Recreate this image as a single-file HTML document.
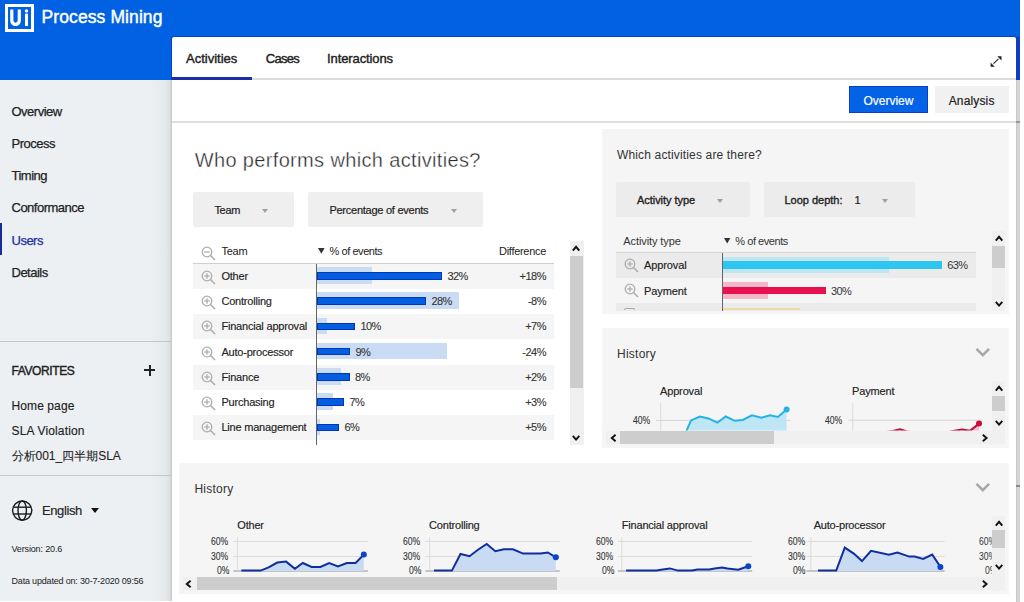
<!DOCTYPE html>
<html><head><meta charset="utf-8">
<style>
*{box-sizing:border-box;margin:0;padding:0}
html,body{width:1024px;height:602px;overflow:hidden;background:#fff;font-family:"Liberation Sans",sans-serif;color:#222}
.a{position:absolute;white-space:nowrap;line-height:1}
svg.a{overflow:visible}
</style></head><body>
<div class="a" style="left:0px;top:0px;width:1020px;height:80px;background:#0061e2;"></div>
<div class="a" style="left:5px;top:4px;width:29px;height:28px;background:transparent;border:3px solid #fff"></div>
<svg class="a" style="left:0;top:0" width="40" height="40"><g fill="#fff"><path d="M10.2 9.4H13.4V20.6A2.15 2.15 0 0 0 17.7 20.6V9.4H20.9V20.6A5.35 5.35 0 0 1 10.2 20.6Z"/><rect x="25" y="13.6" width="3" height="12.4"/><circle cx="26.5" cy="10.9" r="1.7"/></g></svg>
<div class="a " style="left:41.5px;top:8.6px;font-size:17.5px;color:#fff;letter-spacing:0.1px;-webkit-text-stroke:0.45px #fff">Process Mining</div>
<div class="a" style="left:0px;top:80px;width:172px;height:521px;background:linear-gradient(to right,#ecf0f3 0,#ecf0f3 150px,#e6e9ec 166px,#dde0e3 170px,#c9ccd0 171px,#c9ccd0 172px);"></div>
<div class="a " style="left:11.5px;top:104.5px;font-size:13px;letter-spacing:-0.5px;color:#222;-webkit-text-stroke:0.25px #222">Overview</div>
<div class="a " style="left:11.5px;top:137.0px;font-size:13px;letter-spacing:-0.5px;color:#222;-webkit-text-stroke:0.25px #222">Process</div>
<div class="a " style="left:11.5px;top:168.8px;font-size:13px;letter-spacing:-0.5px;color:#222;-webkit-text-stroke:0.25px #222">Timing</div>
<div class="a " style="left:11.5px;top:201.2px;font-size:13px;letter-spacing:-0.5px;color:#222;-webkit-text-stroke:0.25px #222">Conformance</div>
<div class="a " style="left:11.5px;top:233.6px;font-size:13px;letter-spacing:-0.5px;color:#1a2fa0;-webkit-text-stroke:0.25px #1a2fa0">Users</div>
<div class="a " style="left:11.5px;top:265.6px;font-size:13px;letter-spacing:-0.5px;color:#222;-webkit-text-stroke:0.25px #222">Details</div>
<div class="a" style="left:0px;top:222.5px;width:2px;height:32.0px;background:#1a2a9c;"></div>
<div class="a" style="left:0px;top:341px;width:172px;height:1px;background:#c4c6c9;"></div>
<div class="a " style="left:11.5px;top:364.7px;font-size:12px;letter-spacing:-0.4px;-webkit-text-stroke:0.4px #222">FAVORITES</div>
<div class="a" style="left:144px;top:369px;width:11px;height:2px;background:#222;"></div>
<div class="a" style="left:148.5px;top:364.5px;width:2.0px;height:11.0px;background:#222;"></div>
<div class="a " style="left:11.5px;top:399.6px;font-size:12px;letter-spacing:0.1px;-webkit-text-stroke:0.15px #222">Home page</div>
<div class="a " style="left:11.5px;top:424.5px;font-size:12px;letter-spacing:0.15px;-webkit-text-stroke:0.15px #222">SLA Violation</div>
<div class="a " style="left:11.5px;top:449.8px;font-size:12px;letter-spacing:0px;-webkit-text-stroke:0.1px #222">分析001_四半期SLA</div>
<div class="a" style="left:0px;top:475px;width:172px;height:1px;background:#c4c6c9;"></div>
<svg class="a" style="left:11px;top:500px" width="23" height="22" viewBox="0 0 23 22"><g fill="none" stroke="#1a1a1a" stroke-width="1.4"><circle cx="11.2" cy="10.6" r="9.6"/><ellipse cx="11.2" cy="10.6" rx="4.2" ry="9.6"/><line x1="2.5" y1="7.2" x2="19.9" y2="7.2"/><line x1="2.5" y1="14" x2="19.9" y2="14"/></g></svg>
<div class="a " style="left:42px;top:503.7px;font-size:13px;letter-spacing:-0.4px;-webkit-text-stroke:0.15px #222">English</div>
<div class="a" style="left:91px;top:507.5px;width:0;height:0;border-left:4px solid transparent;border-right:4px solid transparent;border-top:5px solid #111"></div>
<div class="a " style="left:11.5px;top:544.5px;font-size:9px;letter-spacing:-0.15px">Version: 20.6</div>
<div class="a " style="left:11.5px;top:577.4px;font-size:9px;letter-spacing:-0.18px">Data updated on: 30-7-2020 09:56</div>
<div class="a" style="left:172px;top:37px;width:844px;height:565px;background:#fff;border-radius:2px 2px 0 0;box-shadow:0 -1px 0 #0a40c4"></div>
<div class="a" style="left:171px;top:37px;width:1px;height:43px;background:#0a40c4;"></div>
<div class="a" style="left:1016px;top:37px;width:4px;height:43px;background:#0f3dc0;"></div>
<div class="a" style="left:1020px;top:0px;width:4px;height:602px;background:#fff;"></div>
<div class="a" style="left:1016px;top:80px;width:4px;height:522px;background:#d4d5d7;box-shadow:inset 1px 0 0 #c8c9cb"></div>
<div class="a" style="left:1016px;top:121px;width:4px;height:1.5px;background:#9a9a9a;"></div>
<div class="a" style="left:1016px;top:485px;width:4px;height:1.5px;background:#8a8a8a;"></div>
<div class="a " style="left:186px;top:51.7px;font-size:13px;letter-spacing:0px;-webkit-text-stroke:0.4px #222">Activities</div>
<div class="a " style="left:265.7px;top:51.7px;font-size:13px;letter-spacing:-0.7px;-webkit-text-stroke:0.4px #222">Cases</div>
<div class="a " style="left:327px;top:51.7px;font-size:13px;letter-spacing:-0.1px;-webkit-text-stroke:0.4px #222">Interactions</div>
<div class="a" style="left:172px;top:78px;width:844px;height:1.5px;background:#dcdcdc;"></div>
<div class="a" style="left:172px;top:76.5px;width:80px;height:3.0px;background:#1a2ea8;"></div>
<svg class="a" style="left:989px;top:55px" width="14" height="13" viewBox="0 0 14 13"><g stroke="#222" stroke-width="1.1" fill="none"><line x1="4.5" y1="8.6" x2="9.5" y2="3.8"/></g><g fill="#222"><path d="M8.3 1.3h4.2v4.1z"/><path d="M5.8 11.7h-4.2v-4.1z"/></g></svg>
<div class="a" style="left:849px;top:86px;width:79px;height:27px;background:#0362e6;border:1px solid #0a3fc0"></div>
<div class="a " style="left:863.4px;top:95.2px;font-size:12px;color:#fff;letter-spacing:0px;-webkit-text-stroke:0.2px #fff">Overview</div>
<div class="a" style="left:935px;top:86px;width:74px;height:27px;background:#f1f1f1;"></div>
<div class="a " style="left:948.7px;top:95.2px;font-size:12px;letter-spacing:0.15px;-webkit-text-stroke:0.2px #222">Analysis</div>
<div class="a" style="left:172px;top:121px;width:844px;height:1.5px;background:#dedede;"></div>
<div class="a " style="left:194.7px;top:149.6px;font-size:20px;letter-spacing:0.35px;color:#2a2a2a;-webkit-text-stroke:0.35px #fff">Who performs which activities?</div>
<div class="a" style="left:193px;top:192px;width:101px;height:35px;background:#efefef;border-radius:2px"></div>
<div class="a" style="left:308px;top:192px;width:175px;height:35px;background:#efefef;border-radius:2px"></div>
<div class="a " style="left:214.4px;top:205.1px;font-size:11px;letter-spacing:-0.3px;-webkit-text-stroke:0.2px #222">Team</div>
<div class="a " style="left:329.4px;top:205.1px;font-size:11px;letter-spacing:-0.25px;-webkit-text-stroke:0.2px #222">Percentage of events</div>
<div class="a" style="left:262px;top:208.6px;width:0;height:0;border-left:3.8px solid transparent;border-right:3.8px solid transparent;border-top:4.3px solid #a0a0a0"></div>
<div class="a" style="left:450.5px;top:208.6px;width:0;height:0;border-left:3.8px solid transparent;border-right:3.8px solid transparent;border-top:4.3px solid #a0a0a0"></div>
<svg class="a" style="left:201px;top:245.8px" width="16" height="16" viewBox="0 0 16 16"><g fill="none" stroke="#adadad" stroke-width="1.3"><circle cx="6" cy="6" r="4.8"/><line x1="9.5" y1="9.5" x2="14" y2="14" stroke-width="1.6"/><line x1="3.3" y1="6" x2="8.7" y2="6"/></g></svg>
<div class="a " style="left:221.4px;top:245.8px;font-size:11px;letter-spacing:-0.2px">Team</div>
<svg class="a" style="left:318px;top:248px" width="8" height="7"><path d="M0 0h6.6l-3.3 5.8z" fill="#333"/></svg>
<div class="a " style="left:329.6px;top:245.8px;font-size:11px;letter-spacing:-0.45px">% of events</div>
<div class="a" style="right:478px;top:245.8px;font-size:11px;letter-spacing:-0.3px">Difference</div>
<div class="a" style="left:193px;top:263px;width:361px;height:1px;background:#cfcfcf;"></div>
<div class="a" style="left:193px;top:263.7px;width:361px;height:25.19999999999999px;background:#f5f5f5;"></div>
<svg class="a" style="left:201px;top:269.9px" width="16" height="16" viewBox="0 0 16 16"><g fill="none" stroke="#adadad" stroke-width="1.3"><circle cx="6" cy="6" r="4.8"/><line x1="9.5" y1="9.5" x2="14" y2="14" stroke-width="1.6"/><line x1="3.3" y1="6" x2="8.7" y2="6"/><line x1="6" y1="3.3" x2="6" y2="8.7"/></g></svg>
<div class="a " style="left:221.4px;top:270.8px;font-size:11px;letter-spacing:-0.2px;-webkit-text-stroke:0.15px #222">Other</div>
<div class="a" style="left:317px;top:267.1px;width:55px;height:16.599999999999966px;background:#cadcf4;"></div>
<div class="a" style="left:317px;top:272.0px;width:125px;height:7.600000000000023px;background:#035fe0;box-shadow:inset 0 0 0 1px #0436b8"></div>
<div class="a " style="left:447.5px;top:270.8px;font-size:11px;letter-spacing:-0.6px;color:#333;-webkit-text-stroke:0.1px #333">32%</div>
<div class="a" style="right:478px;top:270.8px;font-size:11px;letter-spacing:-0.5px;color:#333;-webkit-text-stroke:0.1px #333">+18%</div>
<svg class="a" style="left:201px;top:295.2px" width="16" height="16" viewBox="0 0 16 16"><g fill="none" stroke="#adadad" stroke-width="1.3"><circle cx="6" cy="6" r="4.8"/><line x1="9.5" y1="9.5" x2="14" y2="14" stroke-width="1.6"/><line x1="3.3" y1="6" x2="8.7" y2="6"/><line x1="6" y1="3.3" x2="6" y2="8.7"/></g></svg>
<div class="a " style="left:221.4px;top:296.0px;font-size:11px;letter-spacing:-0.2px;-webkit-text-stroke:0.15px #222">Controlling</div>
<div class="a" style="left:317px;top:292.4px;width:142px;height:16.5px;background:#cadcf4;"></div>
<div class="a" style="left:317px;top:297.2px;width:109px;height:7.699999999999989px;background:#035fe0;box-shadow:inset 0 0 0 1px #0436b8"></div>
<div class="a " style="left:431.5px;top:296.0px;font-size:11px;letter-spacing:-0.6px;color:#333;-webkit-text-stroke:0.1px #333">28%</div>
<div class="a" style="right:478px;top:296.0px;font-size:11px;letter-spacing:-0.5px;color:#333;-webkit-text-stroke:0.1px #333">-8%</div>
<div class="a" style="left:193px;top:314.2px;width:361px;height:25.19999999999999px;background:#f5f5f5;"></div>
<svg class="a" style="left:201px;top:320.4px" width="16" height="16" viewBox="0 0 16 16"><g fill="none" stroke="#adadad" stroke-width="1.3"><circle cx="6" cy="6" r="4.8"/><line x1="9.5" y1="9.5" x2="14" y2="14" stroke-width="1.6"/><line x1="3.3" y1="6" x2="8.7" y2="6"/><line x1="6" y1="3.3" x2="6" y2="8.7"/></g></svg>
<div class="a " style="left:221.4px;top:321.3px;font-size:11px;letter-spacing:-0.2px;-webkit-text-stroke:0.15px #222">Financial approval</div>
<div class="a" style="left:317px;top:317.6px;width:10px;height:16.599999999999966px;background:#cadcf4;"></div>
<div class="a" style="left:317px;top:322.5px;width:38px;height:7.600000000000023px;background:#035fe0;box-shadow:inset 0 0 0 1px #0436b8"></div>
<div class="a " style="left:360.5px;top:321.3px;font-size:11px;letter-spacing:-0.6px;color:#333;-webkit-text-stroke:0.1px #333">10%</div>
<div class="a" style="right:478px;top:321.3px;font-size:11px;letter-spacing:-0.5px;color:#333;-webkit-text-stroke:0.1px #333">+7%</div>
<svg class="a" style="left:201px;top:345.7px" width="16" height="16" viewBox="0 0 16 16"><g fill="none" stroke="#adadad" stroke-width="1.3"><circle cx="6" cy="6" r="4.8"/><line x1="9.5" y1="9.5" x2="14" y2="14" stroke-width="1.6"/><line x1="3.3" y1="6" x2="8.7" y2="6"/><line x1="6" y1="3.3" x2="6" y2="8.7"/></g></svg>
<div class="a " style="left:221.4px;top:346.5px;font-size:11px;letter-spacing:-0.2px;-webkit-text-stroke:0.15px #222">Auto-processor</div>
<div class="a" style="left:317px;top:342.9px;width:130px;height:16.5px;background:#cadcf4;"></div>
<div class="a" style="left:317px;top:347.8px;width:33px;height:7.599999999999966px;background:#035fe0;box-shadow:inset 0 0 0 1px #0436b8"></div>
<div class="a " style="left:355.5px;top:346.5px;font-size:11px;letter-spacing:-0.6px;color:#333;-webkit-text-stroke:0.1px #333">9%</div>
<div class="a" style="right:478px;top:346.5px;font-size:11px;letter-spacing:-0.5px;color:#333;-webkit-text-stroke:0.1px #333">-24%</div>
<div class="a" style="left:193px;top:364.7px;width:361px;height:25.19999999999999px;background:#f5f5f5;"></div>
<svg class="a" style="left:201px;top:370.9px" width="16" height="16" viewBox="0 0 16 16"><g fill="none" stroke="#adadad" stroke-width="1.3"><circle cx="6" cy="6" r="4.8"/><line x1="9.5" y1="9.5" x2="14" y2="14" stroke-width="1.6"/><line x1="3.3" y1="6" x2="8.7" y2="6"/><line x1="6" y1="3.3" x2="6" y2="8.7"/></g></svg>
<div class="a " style="left:221.4px;top:371.8px;font-size:11px;letter-spacing:-0.2px;-webkit-text-stroke:0.15px #222">Finance</div>
<div class="a" style="left:317px;top:368.1px;width:24px;height:16.599999999999966px;background:#cadcf4;"></div>
<div class="a" style="left:317px;top:373.0px;width:32.5px;height:7.600000000000023px;background:#035fe0;box-shadow:inset 0 0 0 1px #0436b8"></div>
<div class="a " style="left:355.0px;top:371.8px;font-size:11px;letter-spacing:-0.6px;color:#333;-webkit-text-stroke:0.1px #333">8%</div>
<div class="a" style="right:478px;top:371.8px;font-size:11px;letter-spacing:-0.5px;color:#333;-webkit-text-stroke:0.1px #333">+2%</div>
<svg class="a" style="left:201px;top:396.2px" width="16" height="16" viewBox="0 0 16 16"><g fill="none" stroke="#adadad" stroke-width="1.3"><circle cx="6" cy="6" r="4.8"/><line x1="9.5" y1="9.5" x2="14" y2="14" stroke-width="1.6"/><line x1="3.3" y1="6" x2="8.7" y2="6"/><line x1="6" y1="3.3" x2="6" y2="8.7"/></g></svg>
<div class="a " style="left:221.4px;top:397.0px;font-size:11px;letter-spacing:-0.2px;-webkit-text-stroke:0.15px #222">Purchasing</div>
<div class="a" style="left:317px;top:393.4px;width:16px;height:16.5px;background:#cadcf4;"></div>
<div class="a" style="left:317px;top:398.2px;width:27px;height:7.699999999999989px;background:#035fe0;box-shadow:inset 0 0 0 1px #0436b8"></div>
<div class="a " style="left:349.5px;top:397.0px;font-size:11px;letter-spacing:-0.6px;color:#333;-webkit-text-stroke:0.1px #333">7%</div>
<div class="a" style="right:478px;top:397.0px;font-size:11px;letter-spacing:-0.5px;color:#333;-webkit-text-stroke:0.1px #333">+3%</div>
<div class="a" style="left:193px;top:415.2px;width:361px;height:25.19999999999999px;background:#f5f5f5;"></div>
<svg class="a" style="left:201px;top:421.4px" width="16" height="16" viewBox="0 0 16 16"><g fill="none" stroke="#adadad" stroke-width="1.3"><circle cx="6" cy="6" r="4.8"/><line x1="9.5" y1="9.5" x2="14" y2="14" stroke-width="1.6"/><line x1="3.3" y1="6" x2="8.7" y2="6"/><line x1="6" y1="3.3" x2="6" y2="8.7"/></g></svg>
<div class="a " style="left:221.4px;top:422.3px;font-size:11px;letter-spacing:-0.2px;-webkit-text-stroke:0.15px #222">Line management</div>
<div class="a" style="left:317px;top:418.6px;width:3px;height:16.599999999999966px;background:#cadcf4;"></div>
<div class="a" style="left:317px;top:423.5px;width:22px;height:7.600000000000023px;background:#035fe0;box-shadow:inset 0 0 0 1px #0436b8"></div>
<div class="a " style="left:344.5px;top:422.3px;font-size:11px;letter-spacing:-0.6px;color:#333;-webkit-text-stroke:0.1px #333">6%</div>
<div class="a" style="right:478px;top:422.3px;font-size:11px;letter-spacing:-0.5px;color:#333;-webkit-text-stroke:0.1px #333">+5%</div>
<div class="a" style="left:316px;top:263.5px;width:1px;height:181.2px;background:#666;"></div>
<div class="a" style="left:569.5px;top:241px;width:14.5px;height:203.5px;background:#f0f0f0;"></div>
<div class="a" style="left:570px;top:256px;width:13px;height:132px;background:#cdcdcd;"></div>
<svg class="a" style="left:572.4px;top:245.7px" width="8.5" height="6"><path d="M0.8 4.6L4.05 0.8L7.3 4.6" fill="none" stroke="#111" stroke-width="1.9"/></svg>
<svg class="a" style="left:572.4px;top:435px" width="8.5" height="6"><path d="M0.8 0.8L4.05 4.6L7.3 0.8" fill="none" stroke="#111" stroke-width="1.9"/></svg>
<div class="a" style="left:602px;top:129px;width:407px;height:185px;background:#f5f5f5;"></div>
<div class="a " style="left:617px;top:148.7px;font-size:12px;letter-spacing:0.15px;color:#333">Which activities are there?</div>
<div class="a" style="left:616px;top:182px;width:134px;height:34.5px;background:#ececec;border-radius:2px"></div>
<div class="a" style="left:764px;top:182px;width:151px;height:34.5px;background:#ececec;border-radius:2px"></div>
<div class="a " style="left:637px;top:194.7px;font-size:11px;letter-spacing:-0.05px;color:#222;-webkit-text-stroke:0.35px #222">Activity type</div>
<div class="a" style="left:717px;top:198.6px;width:0;height:0;border-left:3.8px solid transparent;border-right:3.8px solid transparent;border-top:4.3px solid #a0a0a0"></div>
<div class="a " style="left:784.4px;top:194.7px;font-size:11px;letter-spacing:0px;color:#222;-webkit-text-stroke:0.35px #222">Loop depth:</div>
<div class="a " style="left:854.5px;top:194.7px;font-size:11px;color:#222;-webkit-text-stroke:0.2px #222">1</div>
<div class="a" style="left:882px;top:198.6px;width:0;height:0;border-left:3.8px solid transparent;border-right:3.8px solid transparent;border-top:4.3px solid #a0a0a0"></div>
<div class="a " style="left:623.3px;top:235.7px;font-size:11px;letter-spacing:-0.1px;color:#333">Activity type</div>
<svg class="a" style="left:723.7px;top:238px" width="8" height="7"><path d="M0 0h6.4l-3.2 5.6z" fill="#333"/></svg>
<div class="a " style="left:735.3px;top:235.7px;font-size:11px;letter-spacing:-0.45px;color:#333">% of events</div>
<div class="a" style="left:616px;top:252.4px;width:360px;height:25.400000000000006px;background:#ebebeb;"></div>
<div class="a" style="left:616px;top:252px;width:360px;height:1px;background:#d6d6d6;"></div>
<div class="a" style="left:616px;top:303px;width:360px;height:7.5px;background:#ebebeb;"></div>
<div class="a" style="left:722px;top:257.4px;width:167px;height:16.100000000000023px;background:#bfe4f2;"></div>
<div class="a" style="left:722px;top:261.2px;width:220px;height:7.800000000000011px;background:#2dc6f0;"></div>
<div class="a " style="left:947.3px;top:260.3px;font-size:11px;letter-spacing:-0.6px;color:#333">63%</div>
<svg class="a" style="left:623.5px;top:257.9px" width="16" height="16" viewBox="0 0 16 16"><g fill="none" stroke="#adadad" stroke-width="1.3"><circle cx="6" cy="6" r="4.8"/><line x1="9.5" y1="9.5" x2="14" y2="14" stroke-width="1.6"/><line x1="3.3" y1="6" x2="8.7" y2="6"/><line x1="6" y1="3.3" x2="6" y2="8.7"/></g></svg>
<div class="a " style="left:644px;top:260.3px;font-size:11px;letter-spacing:-0.1px;color:#222;-webkit-text-stroke:0.15px #222">Approval</div>
<div class="a" style="left:722px;top:282.3px;width:46px;height:16.69999999999999px;background:#f4b6c9;"></div>
<div class="a" style="left:722px;top:286.8px;width:104px;height:7.599999999999966px;background:#e8104e;"></div>
<div class="a " style="left:831px;top:285.6px;font-size:11px;letter-spacing:-0.6px;color:#333">30%</div>
<svg class="a" style="left:623.5px;top:283.2px" width="16" height="16" viewBox="0 0 16 16"><g fill="none" stroke="#adadad" stroke-width="1.3"><circle cx="6" cy="6" r="4.8"/><line x1="9.5" y1="9.5" x2="14" y2="14" stroke-width="1.6"/><line x1="3.3" y1="6" x2="8.7" y2="6"/><line x1="6" y1="3.3" x2="6" y2="8.7"/></g></svg>
<div class="a " style="left:644px;top:285.6px;font-size:11px;letter-spacing:-0.1px;color:#222;-webkit-text-stroke:0.15px #222">Payment</div>
<div class="a" style="left:722px;top:307.7px;width:78px;height:2.8000000000000114px;background:#f1dba4;"></div>
<div class="a" style="left:624px;top:308.3px;width:11px;height:2.2px;border-radius:6px 6px 0 0;border:1.3px solid #a9a9a9;border-bottom:none"></div>
<div class="a" style="left:722px;top:252.5px;width:1px;height:58.0px;background:#666;"></div>
<div class="a" style="left:992px;top:231px;width:13px;height:79.5px;background:#f0f0f0;"></div>
<div class="a" style="left:992px;top:245.6px;width:13px;height:22.400000000000006px;background:#cdcdcd;"></div>
<svg class="a" style="left:995px;top:236px" width="8.5" height="6"><path d="M0.8 4.6L4.05 0.8L7.3 4.6" fill="none" stroke="#111" stroke-width="1.9"/></svg>
<svg class="a" style="left:995px;top:300.5px" width="8.5" height="6"><path d="M0.8 0.8L4.05 4.6L7.3 0.8" fill="none" stroke="#111" stroke-width="1.9"/></svg>
<div class="a" style="left:602px;top:328px;width:407px;height:120px;background:#f5f5f5;"></div>
<div class="a " style="left:617px;top:347.8px;font-size:12px;letter-spacing:0.25px;color:#333">History</div>
<svg class="a" style="left:975px;top:347px" width="16" height="11"><path d="M1.5 1.8L7.8 8.2L14.1 1.8" fill="none" stroke="#a8a8a8" stroke-width="2.6"/></svg>
<div class="a " style="left:660px;top:385.7px;font-size:11px;letter-spacing:-0.15px;color:#222;-webkit-text-stroke:0.15px #222">Approval</div>
<div class="a " style="left:633.3px;top:416.0px;font-size:10px;color:#333;-webkit-text-stroke:0.1px #333;transform:scaleX(0.86);transform-origin:0 0">40%</div>
<div class="a " style="left:852.1px;top:385.7px;font-size:11px;letter-spacing:-0.15px;color:#222;-webkit-text-stroke:0.15px #222">Payment</div>
<div class="a " style="left:825.4px;top:416.0px;font-size:10px;color:#333;-webkit-text-stroke:0.1px #333;transform:scaleX(0.86);transform-origin:0 0">40%</div>
<svg class="a" style="left:0;top:0;overflow:hidden" width="1024" height="602"><defs><clipPath id="c602_380"><rect x="602" y="380" width="390" height="50.5"/></clipPath></defs><g clip-path="url(#c602_380)"><line x1="660.7" y1="402.8" x2="660.7" y2="431" stroke="#dcdcdc" stroke-width="1"/><line x1="656" y1="420.4" x2="790.5" y2="420.4" stroke="#d6d6d6" stroke-width="1"/><path d="M686.0 432.0 L691.0 420.4 L700.0 416.5 L708.5 418.4 L717.3 422.7 L725.7 416.5 L734.9 420.8 L742.7 420.0 L751.9 415.3 L761.3 417.7 L770.0 415.3 L777.9 416.9 L786.6 409.6 L786.6 440 L686 440Z" fill="#bfe6f5"/><path d="M686.0 432.0 L691.0 420.4 L700.0 416.5 L708.5 418.4 L717.3 422.7 L725.7 416.5 L734.9 420.8 L742.7 420.0 L751.9 415.3 L761.3 417.7 L770.0 415.3 L777.9 416.9 L786.6 409.6" fill="none" stroke="#22b3e6" stroke-width="2"/><circle cx="786.6" cy="409.6" r="3" fill="#22b3e6"/><line x1="852.8" y1="402.8" x2="852.8" y2="431" stroke="#dcdcdc" stroke-width="1"/><line x1="848.5" y1="420.2" x2="982" y2="420.2" stroke="#d6d6d6" stroke-width="1"/><path d="M853.0 433.0 L880.0 433.0 L893.0 431.0 L900.0 429.3 L907.0 431.5 L920.0 433.0 L945.0 433.0 L953.0 431.0 L962.0 429.6 L970.0 430.8 L979.0 423.6 L979 440 L853 440Z" fill="#f5bccd"/><path d="M853.0 433.0 L880.0 433.0 L893.0 431.0 L900.0 429.3 L907.0 431.5 L920.0 433.0 L945.0 433.0 L953.0 431.0 L962.0 429.6 L970.0 430.8 L979.0 423.6" fill="none" stroke="#c00a35" stroke-width="2"/><circle cx="979" cy="423.6" r="3" fill="#d00a3c"/></g></svg>
<div class="a" style="left:606px;top:430.5px;width:386px;height:13.899999999999977px;background:#f0f0f0;"></div>
<div class="a" style="left:620.2px;top:430.7px;width:153.79999999999995px;height:13.100000000000023px;background:#cdcdcd;"></div>
<svg class="a" style="left:610.5px;top:433.5px" width="6" height="8.5"><path d="M4.6 0.8L0.8 4.05L4.6 7.3" fill="none" stroke="#111" stroke-width="1.9"/></svg>
<svg class="a" style="left:981.5px;top:433.5px" width="6" height="8.5"><path d="M0.8 0.8L4.6 4.05L0.8 7.3" fill="none" stroke="#111" stroke-width="1.9"/></svg>
<div class="a" style="left:992px;top:381.4px;width:13px;height:63.0px;background:#f0f0f0;"></div>
<div class="a" style="left:992px;top:395.8px;width:13px;height:15.199999999999989px;background:#cdcdcd;"></div>
<svg class="a" style="left:995px;top:386px" width="8.5" height="6"><path d="M0.8 4.6L4.05 0.8L7.3 4.6" fill="none" stroke="#111" stroke-width="1.9"/></svg>
<svg class="a" style="left:995px;top:419.5px" width="8.5" height="6"><path d="M0.8 0.8L4.05 4.6L7.3 0.8" fill="none" stroke="#111" stroke-width="1.9"/></svg>
<div class="a" style="left:179px;top:463px;width:830px;height:131px;background:#f5f5f5;"></div>
<div class="a " style="left:194.4px;top:482.8px;font-size:12px;letter-spacing:0.25px;color:#333">History</div>
<svg class="a" style="left:975px;top:482px" width="16" height="11"><path d="M1.5 1.8L7.8 8.2L14.1 1.8" fill="none" stroke="#a8a8a8" stroke-width="2.6"/></svg>
<div class="a " style="left:237.3px;top:519.7px;font-size:11px;letter-spacing:-0.2px;color:#222;-webkit-text-stroke:0.15px #222">Other</div>
<div class="a " style="left:210.8px;top:536.7px;font-size:10px;color:#333;-webkit-text-stroke:0.1px #333;transform:scaleX(0.86);transform-origin:0 0">60%</div>
<div class="a " style="left:210.8px;top:551.5px;font-size:10px;color:#333;-webkit-text-stroke:0.1px #333;transform:scaleX(0.86);transform-origin:0 0">30%</div>
<div class="a " style="left:216.7px;top:565.9px;font-size:10px;color:#333;-webkit-text-stroke:0.1px #333;transform:scaleX(0.86);transform-origin:0 0">0%</div>
<div class="a " style="left:429.1px;top:519.7px;font-size:11px;letter-spacing:-0.2px;color:#222;-webkit-text-stroke:0.15px #222">Controlling</div>
<div class="a " style="left:403.2px;top:536.7px;font-size:10px;color:#333;-webkit-text-stroke:0.1px #333;transform:scaleX(0.86);transform-origin:0 0">60%</div>
<div class="a " style="left:403.2px;top:551.5px;font-size:10px;color:#333;-webkit-text-stroke:0.1px #333;transform:scaleX(0.86);transform-origin:0 0">30%</div>
<div class="a " style="left:409.09999999999997px;top:565.9px;font-size:10px;color:#333;-webkit-text-stroke:0.1px #333;transform:scaleX(0.86);transform-origin:0 0">0%</div>
<div class="a " style="left:621.8px;top:519.7px;font-size:11px;letter-spacing:-0.2px;color:#222;-webkit-text-stroke:0.15px #222">Financial approval</div>
<div class="a " style="left:595.6999999999999px;top:536.7px;font-size:10px;color:#333;-webkit-text-stroke:0.1px #333;transform:scaleX(0.86);transform-origin:0 0">60%</div>
<div class="a " style="left:595.6999999999999px;top:551.5px;font-size:10px;color:#333;-webkit-text-stroke:0.1px #333;transform:scaleX(0.86);transform-origin:0 0">30%</div>
<div class="a " style="left:601.6px;top:565.9px;font-size:10px;color:#333;-webkit-text-stroke:0.1px #333;transform:scaleX(0.86);transform-origin:0 0">0%</div>
<div class="a " style="left:813.7px;top:519.7px;font-size:11px;letter-spacing:-0.2px;color:#222;-webkit-text-stroke:0.15px #222">Auto-processor</div>
<div class="a " style="left:787.5px;top:536.7px;font-size:10px;color:#333;-webkit-text-stroke:0.1px #333;transform:scaleX(0.86);transform-origin:0 0">60%</div>
<div class="a " style="left:787.5px;top:551.5px;font-size:10px;color:#333;-webkit-text-stroke:0.1px #333;transform:scaleX(0.86);transform-origin:0 0">30%</div>
<div class="a " style="left:793.4000000000001px;top:565.9px;font-size:10px;color:#333;-webkit-text-stroke:0.1px #333;transform:scaleX(0.86);transform-origin:0 0">0%</div>
<svg class="a" style="left:0;top:0;overflow:hidden" width="1024" height="602"><defs><clipPath id="c179_500"><rect x="179" y="500" width="813" height="77"/></clipPath></defs><g clip-path="url(#c179_500)"><line x1="237.4" y1="537.4" x2="237.4" y2="571" stroke="#dcdcdc" stroke-width="1"/><line x1="233.4" y1="541.4" x2="367.9" y2="541.4" stroke="#dadada" stroke-width="1"/><line x1="233.4" y1="556.4" x2="367.9" y2="556.4" stroke="#dadada" stroke-width="1"/><line x1="233.4" y1="571" x2="367.9" y2="571" stroke="#c4c4c4" stroke-width="2"/><path d="M241.3 570.6 L260.6 570.6 L268.6 567.3 L277.3 562.5 L286.1 561.6 L294.9 568.7 L302.8 563.0 L311.6 566.9 L320.4 566.9 L329.2 563.0 L338.0 566.4 L346.8 563.0 L355.6 563.0 L363.8 554.6 L363.8 571 L241.3 571Z" fill="#c9dbf3"/><path d="M241.3 570.6 L260.6 570.6 L268.6 567.3 L277.3 562.5 L286.1 561.6 L294.9 568.7 L302.8 563.0 L311.6 566.9 L320.4 566.9 L329.2 563.0 L338.0 566.4 L346.8 563.0 L355.6 563.0 L363.8 554.6" fill="none" stroke="#0f2f9e" stroke-width="2"/><circle cx="363.8" cy="554.6" r="3" fill="#0b44c8"/><line x1="429.7" y1="537.4" x2="429.7" y2="571" stroke="#dcdcdc" stroke-width="1"/><line x1="425.4" y1="541.4" x2="559.7" y2="541.4" stroke="#dadada" stroke-width="1"/><line x1="425.4" y1="556.4" x2="559.7" y2="556.4" stroke="#dadada" stroke-width="1"/><line x1="425.4" y1="571" x2="559.7" y2="571" stroke="#c4c4c4" stroke-width="2"/><path d="M434.0 570.6 L451.9 570.6 L460.5 554.0 L469.5 556.2 L478.0 549.7 L486.7 543.9 L495.3 551.2 L503.9 549.3 L512.9 549.3 L523.2 553.6 L540.4 553.6 L547.9 552.5 L555.8 557.3 L555.8 571 L434 571Z" fill="#c9dbf3"/><path d="M434.0 570.6 L451.9 570.6 L460.5 554.0 L469.5 556.2 L478.0 549.7 L486.7 543.9 L495.3 551.2 L503.9 549.3 L512.9 549.3 L523.2 553.6 L540.4 553.6 L547.9 552.5 L555.8 557.3" fill="none" stroke="#0f2f9e" stroke-width="2"/><circle cx="555.8" cy="557.3" r="3" fill="#0b44c8"/><line x1="621.8" y1="537.4" x2="621.8" y2="571" stroke="#dcdcdc" stroke-width="1"/><line x1="617.9" y1="541.4" x2="752.2" y2="541.4" stroke="#dadada" stroke-width="1"/><line x1="617.9" y1="556.4" x2="752.2" y2="556.4" stroke="#dadada" stroke-width="1"/><line x1="617.9" y1="571" x2="752.2" y2="571" stroke="#c4c4c4" stroke-width="2"/><path d="M626.1 570.6 L656.6 570.6 L660.9 569.7 L669.9 568.4 L678.0 570.6 L692.0 570.6 L697.4 569.5 L709.2 569.5 L714.6 568.4 L722.1 567.4 L727.5 568.4 L738.2 569.7 L748.3 566.3 L748.3 571 L626.1 571Z" fill="#c9dbf3"/><path d="M626.1 570.6 L656.6 570.6 L660.9 569.7 L669.9 568.4 L678.0 570.6 L692.0 570.6 L697.4 569.5 L709.2 569.5 L714.6 568.4 L722.1 567.4 L727.5 568.4 L738.2 569.7 L748.3 566.3" fill="none" stroke="#0f2f9e" stroke-width="2"/><circle cx="748.3" cy="566.3" r="3" fill="#0b44c8"/><line x1="810.9" y1="537.4" x2="810.9" y2="571" stroke="#dcdcdc" stroke-width="1"/><line x1="806.6" y1="541.4" x2="944.7" y2="541.4" stroke="#dadada" stroke-width="1"/><line x1="806.6" y1="556.4" x2="944.7" y2="556.4" stroke="#dadada" stroke-width="1"/><line x1="806.6" y1="571" x2="944.7" y2="571" stroke="#c4c4c4" stroke-width="2"/><path d="M818.0 570.6 L836.2 570.6 L844.8 547.6 L853.8 553.6 L862.0 561.1 L871.0 550.8 L888.9 554.7 L897.4 552.5 L909.3 556.6 L914.6 556.6 L923.2 559.0 L932.2 554.5 L940.4 566.9 L940.4 571 L818 571Z" fill="#c9dbf3"/><path d="M818.0 570.6 L836.2 570.6 L844.8 547.6 L853.8 553.6 L862.0 561.1 L871.0 550.8 L888.9 554.7 L897.4 552.5 L909.3 556.6 L914.6 556.6 L923.2 559.0 L932.2 554.5 L940.4 566.9" fill="none" stroke="#0f2f9e" stroke-width="2"/><circle cx="940.4" cy="566.9" r="3" fill="#0b44c8"/></g></svg>
<div class="a" style="left:979px;top:535px;width:13px;height:45px;overflow:hidden"><div class="a" style="left:0.3px;top:1.8px;font-size:10px;color:#333;transform:scaleX(0.86);transform-origin:0 0">60%</div><div class="a" style="left:0.3px;top:16.6px;font-size:10px;color:#333;transform:scaleX(0.86);transform-origin:0 0">30%</div><div class="a" style="left:6.2px;top:31px;font-size:10px;color:#333;transform:scaleX(0.86);transform-origin:0 0">0%</div></div>
<div class="a" style="left:183px;top:577.1px;width:809px;height:12.699999999999932px;background:#f0f0f0;"></div>
<div class="a" style="left:197.1px;top:577.1px;width:360.0px;height:12.699999999999932px;background:#cdcdcd;"></div>
<svg class="a" style="left:186.3px;top:579.5px" width="6" height="8.5"><path d="M4.6 0.8L0.8 4.05L4.6 7.3" fill="none" stroke="#111" stroke-width="1.9"/></svg>
<svg class="a" style="left:981.5px;top:579.5px" width="6" height="8.5"><path d="M0.8 0.8L4.6 4.05L0.8 7.3" fill="none" stroke="#111" stroke-width="1.9"/></svg>
<div class="a" style="left:992px;top:516.4px;width:13px;height:74.20000000000005px;background:#f0f0f0;"></div>
<div class="a" style="left:992px;top:530.4px;width:13px;height:17.200000000000045px;background:#cdcdcd;"></div>
<svg class="a" style="left:995px;top:521px" width="8.5" height="6"><path d="M0.8 4.6L4.05 0.8L7.3 4.6" fill="none" stroke="#111" stroke-width="1.9"/></svg>
<svg class="a" style="left:995px;top:564px" width="8.5" height="6"><path d="M0.8 0.8L4.05 4.6L7.3 0.8" fill="none" stroke="#111" stroke-width="1.9"/></svg>
</body></html>
